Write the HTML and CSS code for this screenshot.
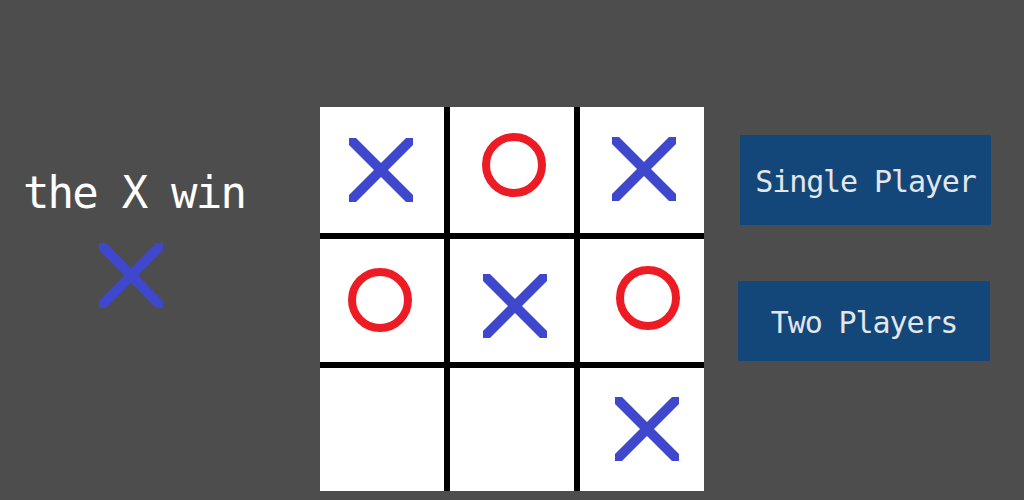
FILE: index.html
```html
<!DOCTYPE html>
<html lang="en">
<head>
<meta charset="utf-8">
<title>Tic Tac Toe</title>
<link rel="stylesheet" href="styles.css">
</head>
<body>
<div class="app">
  <div class="left">
    <div class="status">the X win</div>
    <svg class="mark big-x" viewBox="0 0 64 65" aria-hidden="true">
      <polygon class="x-fill" points="0,0 7,0 64,58 64,65 57,65 0,7"/>
      <polygon class="x-fill" points="64,0 57,0 0,58 0,65 7,65 64,7"/>
    </svg>
  </div>

  <div class="board">
    <div class="cell r1c1">
      <svg class="mark" viewBox="0 0 64 64"><polygon class="x-fill" points="0,0 7,0 64,57 64,64 57,64 0,7"/><polygon class="x-fill" points="64,0 57,0 0,57 0,64 7,64 64,7"/></svg>
    </div>
    <div class="cell r1c2">
      <svg class="mark" viewBox="0 0 64 64"><circle class="o-ring" cx="32" cy="32" r="28"/></svg>
    </div>
    <div class="cell r1c3">
      <svg class="mark" viewBox="0 0 64 64"><polygon class="x-fill" points="0,0 7,0 64,57 64,64 57,64 0,7"/><polygon class="x-fill" points="64,0 57,0 0,57 0,64 7,64 64,7"/></svg>
    </div>
    <div class="cell r2c1">
      <svg class="mark" viewBox="0 0 64 64"><circle class="o-ring" cx="32" cy="32" r="28"/></svg>
    </div>
    <div class="cell r2c2">
      <svg class="mark" viewBox="0 0 64 64"><polygon class="x-fill" points="0,0 7,0 64,57 64,64 57,64 0,7"/><polygon class="x-fill" points="64,0 57,0 0,57 0,64 7,64 64,7"/></svg>
    </div>
    <div class="cell r2c3">
      <svg class="mark" viewBox="0 0 64 64"><circle class="o-ring" cx="32" cy="32" r="28"/></svg>
    </div>
    <div class="cell r3c1"></div>
    <div class="cell r3c2"></div>
    <div class="cell r3c3">
      <svg class="mark" viewBox="0 0 64 64"><polygon class="x-fill" points="0,0 7,0 64,57 64,64 57,64 0,7"/><polygon class="x-fill" points="64,0 57,0 0,57 0,64 7,64 64,7"/></svg>
    </div>
  </div>

  <div class="right">
    <button class="btn btn-single">Single Player</button>
    <button class="btn btn-two">Two Players</button>
  </div>
</div>
</body>
</html>
```

FILE: styles.css
```css
html, body {
  margin: 0;
  padding: 0;
  background: #4d4d4d;
}

.app {
  width: 1024px;
  height: 500px;
  box-sizing: border-box;
  padding-top: 107px;
  display: flex;
  align-items: flex-start;
  background: #4d4d4d;
  font-family: "DejaVu Sans Mono", "Liberation Mono", monospace;
  overflow: hidden;
}

.left {
  width: 320px;
  box-sizing: border-box;
  padding-right: 52px;
  padding-top: 64px;
  display: flex;
  flex-direction: column;
  align-items: center;
}

.status {
  color: #ffffff;
  font-size: 44px;
  line-height: 44px;
  letter-spacing: -1.8px;
  white-space: nowrap;
}

.mark {
  display: block;
  width: 64px;
  height: 64px;
}

.big-x {
  height: 65px;
  margin-top: 28px;
  margin-right: 6px;
}

.x-fill {
  fill: #3f48cc;
}

.o-ring {
  fill: none;
  stroke: #ed1c24;
  stroke-width: 8;
}

.board {
  width: 384px;
  height: 384px;
  flex: none;
  background: #000000;
  display: grid;
  grid-template-columns: 124px 124px 124px;
  grid-template-rows: 126px 123px 123px;
  gap: 6px;
}

.cell {
  background: #ffffff;
  display: flex;
  align-items: center;
  justify-content: center;
}

.r1c1 .mark { transform: translate(-1px, 0); }
.r1c2 .mark { transform: translate(2px, -5px); }
.r1c3 .mark { transform: translate(2px, -1px); }
.r2c1 .mark { transform: translate(-2px, -1px); }
.r2c2 .mark { transform: translate(3px, 5px); }
.r2c3 .mark { transform: translate(6px, -3px); }
.r3c3 .mark { transform: translate(5px, -1px); }

.right {
  padding-left: 36px;
  display: flex;
  flex-direction: column;
  align-items: flex-start;
}

.btn {
  display: flex;
  align-items: center;
  justify-content: center;
  border: none;
  padding: 0;
  margin: 0;
  background: #134679;
  color: #e4e6ea;
  font-family: "DejaVu Sans Mono", "Liberation Mono", monospace;
  font-size: 30px;
  line-height: 30px;
  letter-spacing: -1.1px;
  white-space: nowrap;
}

.btn-single {
  width: 251px;
  height: 90px;
  margin-top: 28px;
  padding-top: 4px;
}

.btn-two {
  width: 252px;
  height: 80px;
  margin-top: 56px;
  margin-left: -2px;
  padding-top: 3px;
}
```
